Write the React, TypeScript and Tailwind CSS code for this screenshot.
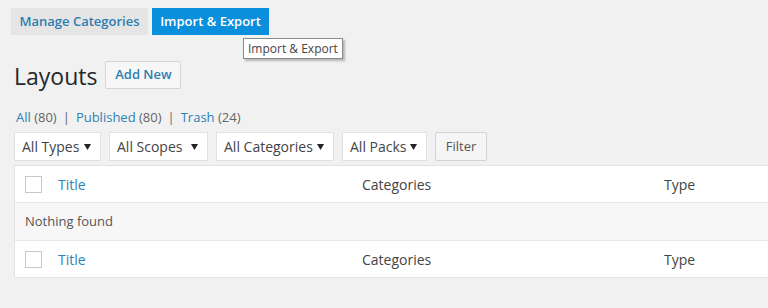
export default function App() {
  const selects = [
    { label: 'All Types', w: 'w-[87px]' },
    { label: 'All Scopes', w: 'w-[99px]' },
    { label: 'All Categories', w: 'w-[118px]' },
    { label: 'All Packs', w: 'w-[85px]' },
  ]

  return (
    <div className="w-[768px] h-[308px] overflow-hidden bg-[#f1f1f1] font-['Open_Sans','Noto_Sans',sans-serif] text-[#32373c]">
      {/* tabs */}
      <div className="flex gap-[4px] pl-[11px] pt-[8px]">
        <div className="h-[27px] w-[137px] flex items-center justify-center bg-[#e5e5e5] text-[13px] font-semibold text-[#2e7db0]">
          Manage Categories
        </div>
        <div className="relative h-[27px] w-[117px] flex items-center justify-center bg-[#0a8fdc] text-[13px] font-semibold text-white">
          Import &amp; Export
          <div className="absolute left-[91px] top-[30px] h-[21px] px-[4px] flex items-center whitespace-nowrap bg-white border border-[#8a8a8a] text-[12px] font-normal text-[#444] shadow-[2px_2px_2px_rgba(0,0,0,0.25)]">
            Import &amp; Export
          </div>
        </div>
      </div>

      {/* heading */}
      <div className="flex items-center gap-[8px] pl-[14px] mt-[26px]">
        <h1 className="text-[23px] leading-none text-[#23282d] pt-[2px]">Layouts</h1>
        <div className="h-[28px] w-[76px] flex items-center justify-center bg-[#f7f7f7] border border-[#d5d5d5] rounded-[2px] text-[13px] font-semibold text-[#2e7db0]">
          Add New
        </div>
      </div>

      {/* status links */}
      <div className="flex items-center gap-[6px] pl-[16px] mt-[19px] text-[13px] leading-[18px]">
        <span className="text-[#2e82b6]">All <span className="text-[#666]">(80)</span></span>
        <span className="text-[#666]">|</span>
        <span className="text-[#2e82b6]">Published <span className="text-[#666]">(80)</span></span>
        <span className="text-[#666]">|</span>
        <span className="text-[#2e82b6]">Trash <span className="text-[#666]">(24)</span></span>
      </div>

      {/* filters */}
      <div className="flex items-center gap-[8px] pl-[14px] mt-[6px]">
        {selects.map((s) => (
          <div
            key={s.label}
            className={`${s.w} h-[29px] flex items-center justify-between pl-[7px] pr-[9px] bg-white border border-[#e2e2e2] text-[14px] text-[#444]`}
          >
            <span>{s.label}</span>
            <svg width="7" height="6" viewBox="0 0 7 6" className="shrink-0">
              <path d="M0 0h7L3.5 6z" fill="#222" />
            </svg>
          </div>
        ))}
        <div className="h-[29px] w-[52px] flex items-center justify-center bg-[#f5f5f5] border border-[#d4d4d4] rounded-[2px] text-[13px] text-[#555]">
          Filter
        </div>
      </div>

      {/* table */}
      <div className="ml-[14px] mt-[4px] w-[770px] bg-white border border-[#e3e3e3] text-[14px]">
        <div className="h-[37px] flex items-center border-b border-[#e8e8e8]">
          <div className="w-[17px] h-[17px] ml-[10px] border border-[#c8c8c8] bg-white" />
          <span className="ml-[16px] w-[304px] text-[#2e82b6]">Title</span>
          <span className="w-[302px] text-[#444]">Categories</span>
          <span className="text-[#444]">Type</span>
        </div>
        <div className="h-[38px] flex items-center pl-[10px] bg-[#f7f7f7] border-b border-[#e8e8e8] text-[13px] text-[#555]">
          Nothing found
        </div>
        <div className="h-[36px] flex items-center">
          <div className="w-[17px] h-[17px] ml-[10px] border border-[#c8c8c8] bg-white" />
          <span className="ml-[16px] w-[304px] text-[#2e82b6]">Title</span>
          <span className="w-[302px] text-[#444]">Categories</span>
          <span className="text-[#444]">Type</span>
        </div>
      </div>
    </div>
  )
}
